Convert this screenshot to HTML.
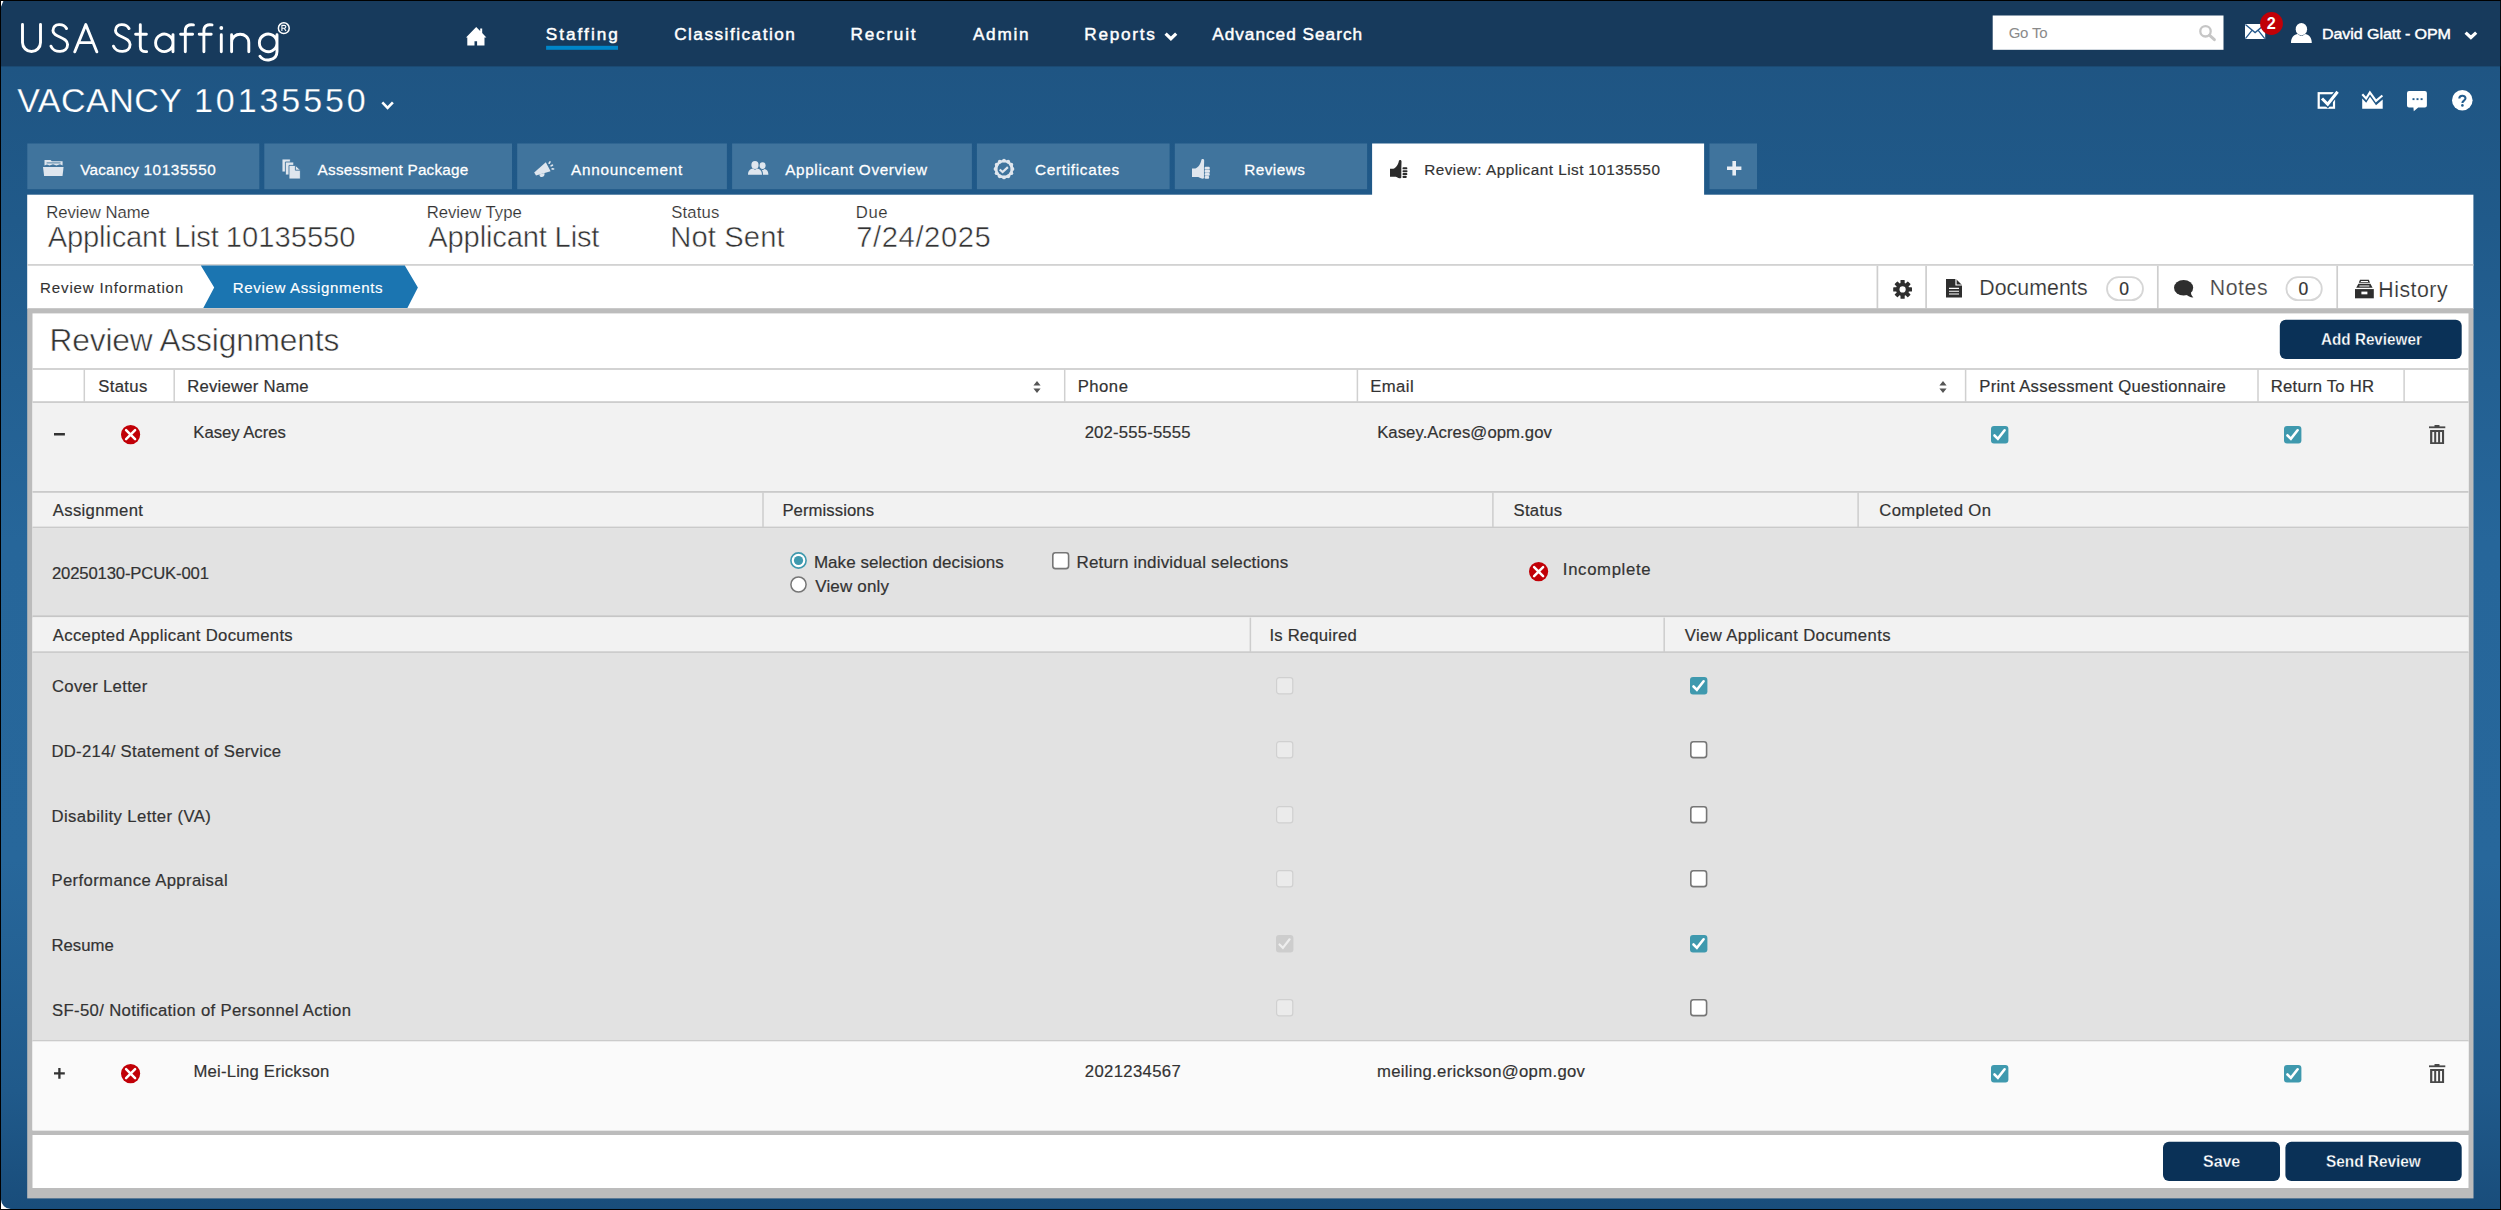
<!DOCTYPE html><html><head><meta charset="utf-8"><title>USA Staffing - Review Assignments</title><style>html,body{margin:0;padding:0}body{width:2501px;height:1210px;position:relative;overflow:hidden;background:#000;font-family:"Liberation Sans", sans-serif;}.t{position:absolute;line-height:1;white-space:pre;}</style></head><body>
<div style="position:absolute;left:1px;top:1px;width:2499.2px;height:1208px;background:linear-gradient(180deg,#1f5583 66px,#205a8a 220px,#26669a 540px,#27679b 860px,#205a8b 1090px,#194d7b 1207px);"></div>
<svg style="position:absolute;left:0;top:0" width="2501" height="1210"><rect x="1" y="1" width="2499.2" height="65.4" fill="#173a5c"/><path d="M1 1 H3.4 L1 6.8 Z" fill="#fff"/><path d="M1 1199.5 V1209 H10.8 A9.8 9.8 0 0 1 1 1199.5 Z" fill="#fff"/><rect x="1992.7" y="15.5" width="230.8" height="34.3" fill="#fff"/><rect x="546.1" y="45.8" width="71.9" height="4.0" fill="#0086c9"/><rect x="27.3" y="143.5" width="232.0" height="45.7" fill="#40749d"/><rect x="264.3" y="143.5" width="247.7" height="45.7" fill="#40749d"/><rect x="517.2" y="143.5" width="209.7" height="45.7" fill="#40749d"/><rect x="732.1" y="143.5" width="239.8" height="45.7" fill="#40749d"/><rect x="976.9" y="143.5" width="192.7" height="45.7" fill="#40749d"/><rect x="1174.8" y="143.5" width="192.3" height="45.7" fill="#40749d"/><rect x="1709.5" y="143.5" width="47.5" height="45.7" fill="#40749d"/><rect x="1372.1" y="143.5" width="332.0" height="52.5" fill="#fff"/><rect x="27.2" y="194.7" width="2446.2" height="114.3" fill="#fff"/><rect x="27.2" y="264.0" width="2446.2" height="1.8" fill="#d2d2d2"/><path d="M200.8 265.6 H404.8 L417.9 287.6 L407.4 308 H203.3 L214.2 287.6 Z" fill="#1b75b1"/><rect x="1876.5500000000002" y="265.8" width="1.7" height="42.5" fill="#cecece"/><rect x="1925.25" y="265.8" width="1.7" height="42.5" fill="#cecece"/><rect x="2156.9500000000003" y="265.8" width="1.7" height="42.5" fill="#cecece"/><rect x="2336.35" y="265.8" width="1.7" height="42.5" fill="#cecece"/><rect x="2107.0" y="277.2" width="36.0" height="22.9" rx="11.45" fill="#fff" stroke="#d6d6d6" stroke-width="1.8"/><rect x="2286.4" y="277.2" width="35.4" height="22.9" rx="11.45" fill="#fff" stroke="#d6d6d6" stroke-width="1.8"/><rect x="27.2" y="308.2" width="2446.3" height="890.2" fill="#bcbcbc"/><rect x="32.5" y="313.4" width="2436.0" height="817.0" fill="#fff"/><rect x="32.5" y="1135" width="2436.0" height="53" fill="#fff"/><rect x="32.5" y="368.1" width="2436.0" height="1.8" fill="#cfcfcf"/><rect x="32.5" y="402.6" width="2436.0" height="89.2" fill="#f2f2f2"/><rect x="32.5" y="401.2" width="2436.0" height="1.8" fill="#cdcdcd"/><rect x="83.55" y="369.5" width="1.5" height="32.5" fill="#d0d0d0"/><rect x="173.45" y="369.5" width="1.5" height="32.5" fill="#d0d0d0"/><rect x="1063.95" y="369.5" width="1.5" height="32.5" fill="#d0d0d0"/><rect x="1356.65" y="369.5" width="1.5" height="32.5" fill="#d0d0d0"/><rect x="1964.85" y="369.5" width="1.5" height="32.5" fill="#d0d0d0"/><rect x="2257.25" y="369.5" width="1.5" height="32.5" fill="#d0d0d0"/><rect x="2403.35" y="369.5" width="1.5" height="32.5" fill="#d0d0d0"/><rect x="32.5" y="491.8" width="2436.0" height="35.6" fill="#f2f2f2"/><rect x="32.5" y="491.0" width="2436.0" height="1.8" fill="#cacaca"/><rect x="32.5" y="526.6" width="2436.0" height="1.8" fill="#cacaca"/><rect x="762.25" y="492.4" width="1.5" height="34.6" fill="#cdcdcd"/><rect x="1492.15" y="492.4" width="1.5" height="34.6" fill="#cdcdcd"/><rect x="1857.35" y="492.4" width="1.5" height="34.6" fill="#cdcdcd"/><rect x="32.5" y="528.2" width="2436.0" height="87.8" fill="#e2e2e2"/><rect x="32.5" y="615.4" width="2436.0" height="2.0" fill="#c6c6c6"/><rect x="32.5" y="617.4" width="2436.0" height="34.6" fill="#f2f2f2"/><rect x="32.5" y="651.3" width="2436.0" height="1.8" fill="#cacaca"/><rect x="1249.65" y="617.6" width="1.5" height="34.4" fill="#cdcdcd"/><rect x="1663.45" y="617.6" width="1.5" height="34.4" fill="#cdcdcd"/><rect x="32.5" y="652.9" width="2436.0" height="387.5" fill="#e2e2e2"/><rect x="32.5" y="1040.0" width="2436.0" height="1.6" fill="#cbcbcb"/><rect x="32.5" y="1041.5" width="2436.0" height="88.9" fill="#fafafa"/><rect x="2279.8" y="319.7" width="181.9" height="39.2" rx="6" fill="#0a3157"/><rect x="2163" y="1141.8" width="117" height="39.3" rx="6" fill="#0a3157"/><rect x="2285.4" y="1141.8" width="176.3" height="39.3" rx="6" fill="#0a3157"/></svg>
<svg style="position:absolute;left:53.6px;top:432.9px;overflow:visible;" width="11" height="3" viewBox="0 0 11 3"><rect width="10.9" height="2.5" fill="#333"/></svg>
<svg style="position:absolute;left:53.7px;top:1067.5px;overflow:visible;" width="10.8" height="10.8" viewBox="0 0 10.8 10.8"><path d="M5.4 0 V10.8 M0 5.4 H10.8" stroke="#333" stroke-width="2.3"/></svg>
<svg style="position:absolute;left:120.5px;top:425.0px;overflow:visible;" width="19.2" height="19.2" viewBox="0 0 19.2 19.2"><circle cx="9.6" cy="9.6" r="9.6" fill="#c10007"/><path d="M5.1 5.1 L14.1 14.1 M14.1 5.1 L5.1 14.1" stroke="#fff" stroke-width="2.5" stroke-linecap="round"/></svg>
<svg style="position:absolute;left:120.5px;top:1063.9px;overflow:visible;" width="19.2" height="19.2" viewBox="0 0 19.2 19.2"><circle cx="9.6" cy="9.6" r="9.6" fill="#c10007"/><path d="M5.1 5.1 L14.1 14.1 M14.1 5.1 L5.1 14.1" stroke="#fff" stroke-width="2.5" stroke-linecap="round"/></svg>
<svg style="position:absolute;left:1529.3000000000002px;top:562.0px;overflow:visible;" width="19.2" height="19.2" viewBox="0 0 19.2 19.2"><circle cx="9.6" cy="9.6" r="9.6" fill="#c10007"/><path d="M5.1 5.1 L14.1 14.1 M14.1 5.1 L5.1 14.1" stroke="#fff" stroke-width="2.5" stroke-linecap="round"/></svg>
<svg style="position:absolute;left:1991.3999999999999px;top:426.2px;overflow:visible;" width="17.4" height="17.4" viewBox="0 0 17.4 17.4"><rect x="0" y="0" width="17.4" height="17.4" rx="3" fill="#3f99ae"/><path d="M3.5 9.5 L6.9 12.9 L13.6 4.3" fill="none" stroke="#fff" stroke-width="2.6" stroke-linecap="round" stroke-linejoin="miter"/></svg>
<svg style="position:absolute;left:2283.6000000000004px;top:426.2px;overflow:visible;" width="17.4" height="17.4" viewBox="0 0 17.4 17.4"><rect x="0" y="0" width="17.4" height="17.4" rx="3" fill="#3f99ae"/><path d="M3.5 9.5 L6.9 12.9 L13.6 4.3" fill="none" stroke="#fff" stroke-width="2.6" stroke-linecap="round" stroke-linejoin="miter"/></svg>
<svg style="position:absolute;left:1991.3999999999999px;top:1065.3px;overflow:visible;" width="17.4" height="17.4" viewBox="0 0 17.4 17.4"><rect x="0" y="0" width="17.4" height="17.4" rx="3" fill="#3f99ae"/><path d="M3.5 9.5 L6.9 12.9 L13.6 4.3" fill="none" stroke="#fff" stroke-width="2.6" stroke-linecap="round" stroke-linejoin="miter"/></svg>
<svg style="position:absolute;left:2283.6000000000004px;top:1065.3px;overflow:visible;" width="17.4" height="17.4" viewBox="0 0 17.4 17.4"><rect x="0" y="0" width="17.4" height="17.4" rx="3" fill="#3f99ae"/><path d="M3.5 9.5 L6.9 12.9 L13.6 4.3" fill="none" stroke="#fff" stroke-width="2.6" stroke-linecap="round" stroke-linejoin="miter"/></svg>
<svg style="position:absolute;left:2428.7px;top:424.9px;overflow:visible;" width="16.3" height="19.1" viewBox="0 0 16.3 19.1"><g fill="#484848"><rect x="5.3" y="0" width="5.4" height="2" rx="0.9"/><rect x="0" y="1.4" width="16.3" height="1.8"/><path d="M1.1 4.9 H15.1 V19.1 H1.1 Z M3.3 6.9 V17.2 H5.2 V6.9 Z M7.2 6.9 V17.2 H9.1 V6.9 Z M11.1 6.9 V17.2 H13 V6.9 Z" fill-rule="evenodd"/></g></svg>
<svg style="position:absolute;left:2428.7px;top:1063.9px;overflow:visible;" width="16.3" height="19.1" viewBox="0 0 16.3 19.1"><g fill="#484848"><rect x="5.3" y="0" width="5.4" height="2" rx="0.9"/><rect x="0" y="1.4" width="16.3" height="1.8"/><path d="M1.1 4.9 H15.1 V19.1 H1.1 Z M3.3 6.9 V17.2 H5.2 V6.9 Z M7.2 6.9 V17.2 H9.1 V6.9 Z M11.1 6.9 V17.2 H13 V6.9 Z" fill-rule="evenodd"/></g></svg>
<svg style="position:absolute;left:1033.2px;top:380.9px;overflow:visible;" width="8" height="12" viewBox="0 0 8 12"><path d="M4 0 L7.6 4.6 H0.4 Z M4 12 L7.6 7.4 H0.4 Z" fill="#555"/></svg>
<svg style="position:absolute;left:1939.3px;top:380.9px;overflow:visible;" width="8" height="12" viewBox="0 0 8 12"><path d="M4 0 L7.6 4.6 H0.4 Z M4 12 L7.6 7.4 H0.4 Z" fill="#555"/></svg>
<svg style="position:absolute;left:790.1px;top:551.5px;overflow:visible;" width="17" height="17" viewBox="0 0 17 17"><circle cx="8.5" cy="8.5" r="7.6" fill="#fff" stroke="#3f99ae" stroke-width="1.6"/><circle cx="8.5" cy="8.5" r="4.6" fill="#3f99ae"/></svg>
<svg style="position:absolute;left:790.1px;top:575.6px;overflow:visible;" width="17" height="17" viewBox="0 0 17 17"><circle cx="8.5" cy="8.5" r="7.6" fill="#fff" stroke="#767676" stroke-width="1.5"/></svg>
<svg style="position:absolute;left:1051.8999999999999px;top:551.5999999999999px;overflow:visible;" width="17.4" height="17.4" viewBox="0 0 17.4 17.4"><rect x="0.8" y="0.8" width="15.8" height="15.8" rx="2.6" fill="#fff" stroke="#767676" stroke-width="1.6"/></svg>
<svg style="position:absolute;left:1276.1px;top:676.9px;overflow:visible;" width="17.4" height="17.4" viewBox="0 0 17.4 17.4"><rect x="0.6" y="0.6" width="16.2" height="16.2" rx="2.6" fill="#ebebeb" stroke="#d0d0d0" stroke-width="1.2"/></svg>
<svg style="position:absolute;left:1689.8999999999999px;top:676.9px;overflow:visible;" width="17.4" height="17.4" viewBox="0 0 17.4 17.4"><rect x="0" y="0" width="17.4" height="17.4" rx="3" fill="#3f99ae"/><path d="M3.5 9.5 L6.9 12.9 L13.6 4.3" fill="none" stroke="#fff" stroke-width="2.6" stroke-linecap="round" stroke-linejoin="miter"/></svg>
<svg style="position:absolute;left:1276.1px;top:741.4px;overflow:visible;" width="17.4" height="17.4" viewBox="0 0 17.4 17.4"><rect x="0.6" y="0.6" width="16.2" height="16.2" rx="2.6" fill="#ebebeb" stroke="#d0d0d0" stroke-width="1.2"/></svg>
<svg style="position:absolute;left:1689.8999999999999px;top:741.4px;overflow:visible;" width="17.4" height="17.4" viewBox="0 0 17.4 17.4"><rect x="0.8" y="0.8" width="15.8" height="15.8" rx="2.6" fill="#fff" stroke="#767676" stroke-width="1.6"/></svg>
<svg style="position:absolute;left:1276.1px;top:805.9px;overflow:visible;" width="17.4" height="17.4" viewBox="0 0 17.4 17.4"><rect x="0.6" y="0.6" width="16.2" height="16.2" rx="2.6" fill="#ebebeb" stroke="#d0d0d0" stroke-width="1.2"/></svg>
<svg style="position:absolute;left:1689.8999999999999px;top:805.9px;overflow:visible;" width="17.4" height="17.4" viewBox="0 0 17.4 17.4"><rect x="0.8" y="0.8" width="15.8" height="15.8" rx="2.6" fill="#fff" stroke="#767676" stroke-width="1.6"/></svg>
<svg style="position:absolute;left:1276.1px;top:870.4px;overflow:visible;" width="17.4" height="17.4" viewBox="0 0 17.4 17.4"><rect x="0.6" y="0.6" width="16.2" height="16.2" rx="2.6" fill="#ebebeb" stroke="#d0d0d0" stroke-width="1.2"/></svg>
<svg style="position:absolute;left:1689.8999999999999px;top:870.4px;overflow:visible;" width="17.4" height="17.4" viewBox="0 0 17.4 17.4"><rect x="0.8" y="0.8" width="15.8" height="15.8" rx="2.6" fill="#fff" stroke="#767676" stroke-width="1.6"/></svg>
<svg style="position:absolute;left:1276.1px;top:934.9px;overflow:visible;" width="17.4" height="17.4" viewBox="0 0 17.4 17.4"><rect x="0" y="0" width="17.4" height="17.4" rx="3" fill="#cdcdcd"/><path d="M3.5 9.5 L6.9 12.9 L13.6 4.3" fill="none" stroke="#eeeeee" stroke-width="2.2" stroke-linecap="round"/></svg>
<svg style="position:absolute;left:1689.8999999999999px;top:934.9px;overflow:visible;" width="17.4" height="17.4" viewBox="0 0 17.4 17.4"><rect x="0" y="0" width="17.4" height="17.4" rx="3" fill="#3f99ae"/><path d="M3.5 9.5 L6.9 12.9 L13.6 4.3" fill="none" stroke="#fff" stroke-width="2.6" stroke-linecap="round" stroke-linejoin="miter"/></svg>
<svg style="position:absolute;left:1276.1px;top:999.4px;overflow:visible;" width="17.4" height="17.4" viewBox="0 0 17.4 17.4"><rect x="0.6" y="0.6" width="16.2" height="16.2" rx="2.6" fill="#ebebeb" stroke="#d0d0d0" stroke-width="1.2"/></svg>
<svg style="position:absolute;left:1689.8999999999999px;top:999.4px;overflow:visible;" width="17.4" height="17.4" viewBox="0 0 17.4 17.4"><rect x="0.8" y="0.8" width="15.8" height="15.8" rx="2.6" fill="#fff" stroke="#767676" stroke-width="1.6"/></svg>
<svg style="position:absolute;left:0px;top:0px;overflow:visible;" width="300" height="66" viewBox="0 0 300 66"><path d="M22.5 24.5 V42.5 A9 9 0 0 0 40.5 42.5 V24.5 M66.5 28.5 C64 23.5 53.5 22.5 53 30.5 C52.6 37.5 67.6 36.5 67.6 44.5 C67.6 53.5 53.5 53.3 51 46.2 M74.8 51.8 L85.8 24.6 L96.8 51.8 M79 42.6 H92.6 M129 28.5 C126.5 23.5 116 22.5 115.5 30.5 C115.1 37.5 130.1 36.5 130.1 44.5 C130.1 53.5 116 53.3 113.5 46.2 M140.3 24.8 V46.5 C140.3 50.5 142.5 52 146.6 51.6 M135.6 34.3 H146.4 M173 43 A8.7 8.7 0 1 0 172.99 43.3 M173 34.6 V51.8 M185.3 51.8 V30.5 C185.3 26 188.5 24 193.4 24.9 M180.6 34.3 H192.6 M203.9 51.8 V30.5 C203.9 26 207.1 24 212 24.9 M199.2 34.3 H211.2 M221.3 34.8 V51.8 M231.6 34.8 V51.8 M231.6 42.5 C231.6 31.5 248.8 31.5 248.8 42.5 V51.8 M277 43 A8.8 8.8 0 1 0 276.99 43.3 M277 34.8 V51.5 C277 61.5 263.5 62 260 56.2" fill="none" stroke="#fff" stroke-width="2.9" stroke-linecap="round" stroke-linejoin="round"/><circle cx="221.3" cy="28" r="1.9" fill="#fff"/><circle cx="283.8" cy="28.2" r="5.4" fill="none" stroke="#fff" stroke-width="1.5"/><path d="M281.9 31 V25.4 H284.2 C286.4 25.4 286.4 28.3 284.2 28.3 H281.9 M284.3 28.4 L286 31" fill="none" stroke="#fff" stroke-width="1.1"/></svg>
<svg style="position:absolute;left:466.4px;top:27.2px;overflow:visible;" width="20.4" height="18.6" viewBox="0 0 20.4 18.6"><path d="M10.2 0 L0 10.4 H1.3 V18.6 H8.5 V14.2 H11.1 V18.6 H18.5 V10.4 H20.4 L16.2 6.1 V1.4 H14.2 V4.1 Z" fill="#fff"/></svg>
<svg style="position:absolute;left:1164.1px;top:32.2px;overflow:visible;" width="13.8" height="8.6" viewBox="0 0 13.8 8.6"><path d="M1.6 1.6 L6.9 6.7 L12.200000000000001 1.6" fill="none" stroke="#fff" stroke-width="3.2" stroke-linejoin="miter" stroke-linecap="butt"/></svg>
<svg style="position:absolute;left:2197.6px;top:23.8px;overflow:visible;" width="18" height="18" viewBox="0 0 18 18"><circle cx="7.5" cy="7.3" r="5.2" fill="none" stroke="#c6c6c6" stroke-width="2.3"/><path d="M11.4 11.2 L16.4 15.7" stroke="#c6c6c6" stroke-width="2.9" stroke-linecap="round"/></svg>
<svg style="position:absolute;left:2245.4px;top:24px;overflow:visible;" width="20.2" height="15" viewBox="0 0 20.2 15"><rect width="20.2" height="15" fill="#fff"/><path d="M0.4 0.6 L10.1 8.6 L19.8 0.6 M0.4 14.6 L7 6.4 M19.8 14.6 L13.2 6.4" fill="none" stroke="#23578b" stroke-width="1.3"/></svg>
<svg style="position:absolute;left:2259.9px;top:11.6px;overflow:visible;" width="23" height="23" viewBox="0 0 23 23"><circle cx="11.5" cy="11.5" r="11.4" fill="#c10007"/></svg>
<svg style="position:absolute;left:2291.4px;top:22.6px;overflow:visible;" width="20.8" height="20" viewBox="0 0 20.8 20"><ellipse cx="10.4" cy="6.2" rx="5.7" ry="6.2" fill="#fff"/><path d="M0 20 C0 14 3 11.6 7 11 C8.6 13.4 12.2 13.4 13.8 11 C17.8 11.6 20.8 14 20.8 20 Z" fill="#fff"/></svg>
<svg style="position:absolute;left:2464.3px;top:31.2px;overflow:visible;" width="13.8" height="8.4" viewBox="0 0 13.8 8.4"><path d="M1.6 1.6 L6.9 6.500000000000001 L12.200000000000001 1.6" fill="none" stroke="#fff" stroke-width="3.2" stroke-linejoin="miter" stroke-linecap="butt"/></svg>
<svg style="position:absolute;left:381.1px;top:100.8px;overflow:visible;" width="13.2" height="8.4" viewBox="0 0 13.2 8.4"><path d="M1.3 1.3 L6.6 6.800000000000001 L11.899999999999999 1.3" fill="none" stroke="#fff" stroke-width="2.6" stroke-linejoin="miter" stroke-linecap="butt"/></svg>
<svg style="position:absolute;left:2310px;top:85px;overflow:visible;" width="30" height="30" viewBox="0 0 30 30"><rect x="8.7" y="8.2" width="15.3" height="14.5" fill="none" stroke="#fff" stroke-width="2.2"/><path d="M12 13.5 L17.7 19.2 L27.6 6.7" fill="none" stroke="#1f5887" stroke-width="5.6"/><path d="M12 13.5 L17.7 19.2 L27.6 6.7" fill="none" stroke="#fff" stroke-width="3"/></svg>
<svg style="position:absolute;left:2355px;top:85px;overflow:visible;" width="35" height="30" viewBox="0 0 35 30"><path d="M7.3 9.3 L11.1 13.5 L14.9 7.4 L21 15.8 L27.4 10.5" fill="none" stroke="#fff" stroke-width="2.2" stroke-linejoin="miter"/><path d="M7.2 13.6 L11.2 17.8 L15 11.8 L21 20.2 L27.7 14.6 V23.8 H7.2 Z" fill="#fff"/></svg>
<svg style="position:absolute;left:2406.8px;top:90.9px;overflow:visible;" width="20" height="20.2" viewBox="0 0 20 20.2"><path d="M2 0 H17.9 A2 2 0 0 1 19.9 2 V14.4 A2 2 0 0 1 17.9 16.4 H11.2 L6.8 20.2 L6.4 16.4 H2 A2 2 0 0 1 0 14.4 V2 A2 2 0 0 1 2 0 Z" fill="#fff"/><g fill="#235d8e"><rect x="5.5" y="7.2" width="2" height="1.9"/><rect x="9.5" y="7.2" width="2" height="1.9"/><rect x="13.6" y="7.2" width="2" height="1.9"/></g></svg>
<svg style="position:absolute;left:2451.6px;top:89.7px;overflow:visible;" width="20.6" height="20.6" viewBox="0 0 20.6 20.6"><circle cx="10.3" cy="10.3" r="10.3" fill="#fff"/><path d="M7.3 8.6 C7.3 4.9 13.5 4.9 13.5 8.3 C13.5 10.6 10.4 10.6 10.4 12.9" fill="none" stroke="#235d8e" stroke-width="2.1"/><circle cx="10.4" cy="15.4" r="1.3" fill="#235d8e"/></svg>
<svg style="position:absolute;left:43.4px;top:160.4px;overflow:visible;" width="20.4" height="16" viewBox="0 0 20.4 16"><g fill="#dfe6ee"><path d="M1.5 0 H7.6 L8.8 1.3 H19.6 V5.6 L17 4.2 L13.4 5.6 L10 4.2 L6.6 5.6 L4 4.4 L1.5 5.6 Z"/><path d="M0 7 H20.6 L19.5 16 H1.1 Z"/></g><path d="M3.6 2.9 H17.6" stroke="#40749d" stroke-width="0.9"/></svg>
<svg style="position:absolute;left:282.2px;top:158.6px;overflow:visible;" width="18.4" height="20" viewBox="0 0 18.4 20"><g fill="#dfe6ee" stroke="#40749d" stroke-width="0.9"><path d="M0 0 H8.4 V13 H0 Z"/><path d="M3.4 3 H11.8 V16 H3.4 Z"/><path d="M7 6.4 H13.6 L18.4 11 V20 H7 Z"/></g><path d="M13.4 6.6 V11.2 H18.2" fill="none" stroke="#40749d" stroke-width="0.9"/></svg>
<svg style="position:absolute;left:534.4px;top:160.6px;overflow:visible;" width="20.2" height="16" viewBox="0 0 20.2 16"><g fill="#dfe6ee"><path d="M0.2 11.4 L11.8 1.3 L16.6 10.2 L2 14.6 Z"/><path d="M5.4 13.4 L10.4 12 C11 14.4 9.6 16 7.6 16 C6.2 16 5.4 14.8 5.4 13.4 Z"/></g><g stroke="#dfe6ee" stroke-width="1.7" stroke-linecap="round"><path d="M15.2 2.2 L16 0.9"/><path d="M17.2 4.8 L18.4 4.2"/><path d="M18.2 7.8 L19.6 8"/></g></svg>
<svg style="position:absolute;left:748px;top:161.4px;overflow:visible;" width="20.4" height="13.8" viewBox="0 0 20.4 13.8"><g fill="#dfe6ee"><ellipse cx="7" cy="4" rx="3.6" ry="4"/><path d="M0 13.8 C0 9.4 2.4 8.2 5 7.6 C6.2 9 7.8 9 9 7.6 C11.6 8.2 14 9.4 14 13.8 Z"/><ellipse cx="14.6" cy="4.6" rx="3" ry="3.4"/><path d="M15 13.8 C15 11 14.4 9.6 13.2 8.6 C14.4 9.2 15.6 9 16.4 8 C18.6 8.6 20.4 9.6 20.4 13.8 Z"/></g></svg>
<svg style="position:absolute;left:992.5px;top:157.5px;overflow:visible;" width="22" height="22" viewBox="0 0 22 22"><circle cx="11" cy="11" r="8.0" fill="none" stroke="#dfe6ee" stroke-width="2.7"/><g fill="#dfe6ee"><circle cx="19.45" cy="11.00" r="1.9"/><circle cx="18.32" cy="15.22" r="1.9"/><circle cx="15.23" cy="18.32" r="1.9"/><circle cx="11.00" cy="19.45" r="1.9"/><circle cx="6.78" cy="18.32" r="1.9"/><circle cx="3.68" cy="15.22" r="1.9"/><circle cx="2.55" cy="11.00" r="1.9"/><circle cx="3.68" cy="6.77" r="1.9"/><circle cx="6.77" cy="3.68" r="1.9"/><circle cx="11.00" cy="2.55" r="1.9"/><circle cx="15.23" cy="3.68" r="1.9"/><circle cx="18.32" cy="6.77" r="1.9"/></g><path d="M6.7 11.5 L9.6 14.1 L14.9 9.1" fill="none" stroke="#dfe6ee" stroke-width="2.2"/></svg>
<svg style="position:absolute;left:1192px;top:158.6px;overflow:visible;" width="18" height="20" viewBox="0 0 18 20"><g transform="scale(1.04,1.055)"><g fill="#dfe6ee"><path d="M0 9 H3.2 C6 8.2 8.2 5 9 1 C9.2 -0.3 11.5 -0.3 11.7 1.4 L11.5 8 V17.8 C11.5 18.7 10 18.9 8.6 18.3 L6 17 H0 Z"/><rect x="12.15" y="7.4" width="4.9" height="2.65" rx="0.9"/><rect x="12.15" y="10.3" width="5.1" height="2.65" rx="0.9"/><rect x="12.15" y="13.2" width="4.9" height="2.65" rx="0.9"/><rect x="12.15" y="16.1" width="4.3" height="2.65" rx="0.9"/></g></g></svg>
<svg style="position:absolute;left:1390.4px;top:160.3px;overflow:visible;" width="17" height="18.6" viewBox="0 0 17 18.6"><g transform="scale(0.985,0.985)"><g fill="#2b2b2b"><path d="M0 9 H3.2 C6 8.2 8.2 5 9 1 C9.2 -0.3 11.5 -0.3 11.7 1.4 L11.5 8 V17.8 C11.5 18.7 10 18.9 8.6 18.3 L6 17 H0 Z"/><rect x="12.700000000000001" y="7.4" width="4.9" height="2.0999999999999996" rx="0.9"/><rect x="12.700000000000001" y="10.3" width="5.1" height="2.0999999999999996" rx="0.9"/><rect x="12.700000000000001" y="13.2" width="4.9" height="2.0999999999999996" rx="0.9"/><rect x="12.700000000000001" y="16.1" width="4.3" height="2.0999999999999996" rx="0.9"/></g></g></svg>
<svg style="position:absolute;left:1726.6px;top:161.4px;overflow:visible;" width="14.4" height="14.4" viewBox="0 0 14.4 14.4"><path d="M7.2 0 V14.4 M0 7.2 H14.4" stroke="#e9eef4" stroke-width="3.6"/></svg>
<svg style="position:absolute;left:1892.8px;top:280px;overflow:visible;" width="19.2" height="18.8" viewBox="0 0 19.2 18.8"><g transform="translate(9.6,9.4)"><g fill="#2e2e2e"><rect x="-2.1" y="-9.4" width="4.2" height="18.8" rx="0.6" transform="rotate(0)"/><rect x="-2.1" y="-9.4" width="4.2" height="18.8" rx="0.6" transform="rotate(45)"/><rect x="-2.1" y="-9.4" width="4.2" height="18.8" rx="0.6" transform="rotate(90)"/><rect x="-2.1" y="-9.4" width="4.2" height="18.8" rx="0.6" transform="rotate(135)"/><circle r="6.6"/></g><circle r="3.1" fill="#fff"/></g></svg>
<svg style="position:absolute;left:1945.8px;top:279px;overflow:visible;" width="16" height="18.6" viewBox="0 0 16 18.6"><path d="M0 0 H10 L16 6 V18.6 H0 Z" fill="#2e2e2e"/><path d="M10 0 V6 H16" fill="none" stroke="#fff" stroke-width="1.2"/><path d="M3 9.4 H13 M3 12.2 H13 M3 15 H13" stroke="#fff" stroke-width="1.1"/></svg>
<svg style="position:absolute;left:2173.8px;top:280px;overflow:visible;" width="20" height="17.6" viewBox="0 0 20 17.6"><ellipse cx="9.6" cy="7.8" rx="9.6" ry="7.8" fill="#2e2e2e"/><path d="M11 13 C13 16 16 17.4 19.4 17.4 C17.4 15.6 16.8 13.6 17 11.4 Z" fill="#2e2e2e"/></svg>
<svg style="position:absolute;left:2354.6px;top:278.6px;overflow:visible;" width="18.8" height="19.3" viewBox="0 0 18.8 19.3"><g transform="scale(1,1.05)"><g fill="#2e2e2e"><path d="M0 9.6 H18.8 V18.4 H0 Z"/><path d="M1.2 8.4 L3.4 4.6 H15.4 L17.6 8.4 Z"/><path d="M3.8 3.6 L5 0.8 H13.8 L15 3.6 Z"/></g><path d="M4.4 6.6 H14.4 M5.8 2.4 H13" stroke="#fff" stroke-width="1"/><rect x="6.4" y="12" width="6" height="2.6" fill="#fff"/></g></svg>
<div class="t" style="left:545.74px;top:26.30px;font-size:17.2px;font-weight:400;color:#fff;letter-spacing:2.022px;-webkit-text-stroke:0.45px #fff;">Staffing</div>
<div class="t" style="left:674.15px;top:26.30px;font-size:17.2px;font-weight:400;color:#fff;letter-spacing:1.498px;-webkit-text-stroke:0.45px #fff;">Classification</div>
<div class="t" style="left:850.61px;top:26.30px;font-size:17.2px;font-weight:400;color:#fff;letter-spacing:1.739px;-webkit-text-stroke:0.45px #fff;">Recruit</div>
<div class="t" style="left:972.89px;top:26.30px;font-size:17.2px;font-weight:400;color:#fff;letter-spacing:1.745px;-webkit-text-stroke:0.45px #fff;">Admin</div>
<div class="t" style="left:1084.31px;top:26.30px;font-size:17.2px;font-weight:400;color:#fff;letter-spacing:1.716px;-webkit-text-stroke:0.45px #fff;">Reports</div>
<div class="t" style="left:1212.19px;top:26.30px;font-size:17.2px;font-weight:400;color:#fff;letter-spacing:1.015px;-webkit-text-stroke:0.45px #fff;">Advanced Search</div>
<div class="t" style="left:2008.65px;top:24.80px;font-size:15.0px;font-weight:400;color:#8a8a8a;letter-spacing:-0.191px;">Go To</div>
<div class="t" style="left:2266.84px;top:14.70px;font-size:16.2px;font-weight:700;color:#fff;letter-spacing:0.000px;">2</div>
<div class="t" style="left:2322.00px;top:25.30px;font-size:16.1px;font-weight:400;color:#fff;letter-spacing:-0.099px;-webkit-text-stroke:0.45px #fff;transform:scaleY(0.93);transform-origin:1.32px 14.00px;">David Glatt - OPM</div>
<div class="t" style="left:17.13px;top:82.60px;font-size:34.0px;font-weight:400;color:#fff;letter-spacing:0.498px;-webkit-text-stroke:0.25px #1f5786;">VACANCY</div>
<div class="t" style="left:193.99px;top:82.60px;font-size:34.0px;font-weight:400;color:#fff;letter-spacing:2.927px;-webkit-text-stroke:0.25px #1f5786;">10135550</div>
<div class="t" style="left:80.17px;top:162.00px;font-size:15.3px;font-weight:400;color:#fff;letter-spacing:0.213px;-webkit-text-stroke:0.27px #fff;">Vacancy</div>
<div class="t" style="left:143.47px;top:162.00px;font-size:15.3px;font-weight:400;color:#fff;letter-spacing:0.604px;-webkit-text-stroke:0.27px #fff;">10135550</div>
<div class="t" style="left:317.61px;top:162.00px;font-size:15.3px;font-weight:400;color:#fff;letter-spacing:0.209px;-webkit-text-stroke:0.27px #fff;">Assessment Package</div>
<div class="t" style="left:571.11px;top:162.00px;font-size:15.3px;font-weight:400;color:#fff;letter-spacing:0.751px;-webkit-text-stroke:0.27px #fff;">Announcement</div>
<div class="t" style="left:785.21px;top:162.00px;font-size:15.3px;font-weight:400;color:#fff;letter-spacing:0.646px;-webkit-text-stroke:0.27px #fff;">Applicant Overview</div>
<div class="t" style="left:1034.96px;top:162.00px;font-size:15.3px;font-weight:400;color:#fff;letter-spacing:0.704px;-webkit-text-stroke:0.27px #fff;">Certificates</div>
<div class="t" style="left:1244.18px;top:162.00px;font-size:15.3px;font-weight:400;color:#fff;letter-spacing:0.471px;-webkit-text-stroke:0.27px #fff;">Reviews</div>
<div class="t" style="left:1424.14px;top:162.00px;font-size:15.3px;font-weight:400;color:#333;letter-spacing:0.503px;-webkit-text-stroke:0.2px #333;">Review: Applicant List</div>
<div class="t" style="left:1588.33px;top:162.00px;font-size:15.3px;font-weight:400;color:#333;letter-spacing:0.500px;-webkit-text-stroke:0.2px #333;">10135550</div>
<div class="t" style="left:46.26px;top:205.30px;font-size:16.7px;font-weight:400;color:#333;letter-spacing:-0.031px;-webkit-text-stroke:0.15px #fff;">Review Name</div>
<div class="t" style="left:426.76px;top:205.30px;font-size:16.7px;font-weight:400;color:#333;letter-spacing:-0.027px;-webkit-text-stroke:0.15px #fff;">Review Type</div>
<div class="t" style="left:671.17px;top:205.30px;font-size:16.7px;font-weight:400;color:#333;letter-spacing:0.180px;-webkit-text-stroke:0.15px #fff;">Status</div>
<div class="t" style="left:855.86px;top:205.30px;font-size:16.7px;font-weight:400;color:#333;letter-spacing:0.568px;-webkit-text-stroke:0.15px #fff;">Due</div>
<div class="t" style="left:47.69px;top:223.40px;font-size:29.2px;font-weight:400;color:#333;letter-spacing:-0.188px;-webkit-text-stroke:0.5px #fff;">Applicant List</div>
<div class="t" style="left:225.73px;top:223.40px;font-size:29.2px;font-weight:400;color:#333;letter-spacing:-0.001px;-webkit-text-stroke:0.5px #fff;">10135550</div>
<div class="t" style="left:428.29px;top:223.40px;font-size:29.2px;font-weight:400;color:#333;letter-spacing:-0.188px;-webkit-text-stroke:0.5px #fff;">Applicant List</div>
<div class="t" style="left:670.35px;top:223.40px;font-size:29.2px;font-weight:400;color:#333;letter-spacing:0.104px;-webkit-text-stroke:0.5px #fff;">Not Sent</div>
<div class="t" style="left:856.25px;top:223.40px;font-size:29.2px;font-weight:400;color:#333;letter-spacing:0.583px;-webkit-text-stroke:0.5px #fff;">7/24/2025</div>
<div class="t" style="left:40.12px;top:280.20px;font-size:15.1px;font-weight:400;color:#333;letter-spacing:0.817px;-webkit-text-stroke:0.12px #333;">Review Information</div>
<div class="t" style="left:232.74px;top:280.20px;font-size:15.1px;font-weight:400;color:#fff;letter-spacing:0.628px;-webkit-text-stroke:0.15px #fff;">Review Assignments</div>
<div class="t" style="left:1979.16px;top:277.80px;font-size:21.3px;font-weight:400;color:#333;letter-spacing:0.097px;-webkit-text-stroke:0.18px #fff;">Documents</div>
<div class="t" style="left:2119.22px;top:281.00px;font-size:17.5px;font-weight:400;color:#333;letter-spacing:0.000px;-webkit-text-stroke:0.2px #333;">0</div>
<div class="t" style="left:2209.75px;top:277.80px;font-size:21.3px;font-weight:400;color:#444;letter-spacing:0.544px;-webkit-text-stroke:0.2px #fff;">Notes</div>
<div class="t" style="left:2298.42px;top:281.00px;font-size:17.5px;font-weight:400;color:#333;letter-spacing:0.000px;-webkit-text-stroke:0.2px #333;">0</div>
<div class="t" style="left:2378.36px;top:279.90px;font-size:21.3px;font-weight:400;color:#333;letter-spacing:0.484px;-webkit-text-stroke:0.18px #fff;">History</div>
<div class="t" style="left:49.55px;top:325.20px;font-size:31.7px;font-weight:400;color:#333;letter-spacing:-0.154px;-webkit-text-stroke:0.5px #fff;">Review Assignments</div>
<div class="t" style="left:2320.73px;top:331.30px;font-size:17.0px;font-weight:700;color:#fff;letter-spacing:0.000px;-webkit-text-stroke:0.3px #0a3157;transform:scaleX(0.8963);transform-origin:0.42px 14.00px;">Add Reviewer</div>
<div class="t" style="left:98.24px;top:378.90px;font-size:16.7px;font-weight:400;color:#333;letter-spacing:0.350px;-webkit-text-stroke:0.2px #333;">Status</div>
<div class="t" style="left:187.13px;top:378.90px;font-size:16.7px;font-weight:400;color:#333;letter-spacing:0.234px;-webkit-text-stroke:0.2px #333;">Reviewer Name</div>
<div class="t" style="left:1077.63px;top:378.90px;font-size:16.7px;font-weight:400;color:#333;letter-spacing:0.512px;-webkit-text-stroke:0.2px #333;">Phone</div>
<div class="t" style="left:1370.13px;top:378.90px;font-size:16.7px;font-weight:400;color:#333;letter-spacing:0.438px;-webkit-text-stroke:0.2px #333;">Email</div>
<div class="t" style="left:1979.23px;top:378.90px;font-size:16.7px;font-weight:400;color:#333;letter-spacing:0.316px;-webkit-text-stroke:0.2px #333;">Print Assessment Questionnaire</div>
<div class="t" style="left:2270.83px;top:378.90px;font-size:16.7px;font-weight:400;color:#333;letter-spacing:0.213px;-webkit-text-stroke:0.2px #333;">Return To HR</div>
<div class="t" style="left:193.33px;top:425.10px;font-size:16.7px;font-weight:400;color:#333;letter-spacing:-0.029px;-webkit-text-stroke:0.2px #333;">Kasey Acres</div>
<div class="t" style="left:1084.66px;top:425.10px;font-size:16.7px;font-weight:400;color:#333;letter-spacing:0.182px;-webkit-text-stroke:0.2px #333;">202-555-5555</div>
<div class="t" style="left:1377.13px;top:425.10px;font-size:16.7px;font-weight:400;color:#333;letter-spacing:0.074px;-webkit-text-stroke:0.2px #333;">Kasey.Acres@opm.gov</div>
<div class="t" style="left:52.77px;top:503.00px;font-size:16.7px;font-weight:400;color:#333;letter-spacing:0.330px;-webkit-text-stroke:0.2px #333;">Assignment</div>
<div class="t" style="left:782.43px;top:503.00px;font-size:16.7px;font-weight:400;color:#333;letter-spacing:0.068px;-webkit-text-stroke:0.2px #333;">Permissions</div>
<div class="t" style="left:1513.54px;top:503.00px;font-size:16.7px;font-weight:400;color:#333;letter-spacing:0.270px;-webkit-text-stroke:0.2px #333;">Status</div>
<div class="t" style="left:1879.25px;top:503.00px;font-size:16.7px;font-weight:400;color:#333;letter-spacing:0.375px;-webkit-text-stroke:0.2px #333;">Completed On</div>
<div class="t" style="left:51.96px;top:565.80px;font-size:16.7px;font-weight:400;color:#333;letter-spacing:-0.158px;-webkit-text-stroke:0.2px #333;">20250130-PCUK-001</div>
<div class="t" style="left:813.91px;top:554.20px;font-size:17.0px;font-weight:400;color:#333;letter-spacing:0.040px;-webkit-text-stroke:0.2px #333;">Make selection decisions</div>
<div class="t" style="left:815.23px;top:577.70px;font-size:17.0px;font-weight:400;color:#333;letter-spacing:0.169px;-webkit-text-stroke:0.2px #333;">View only</div>
<div class="t" style="left:1076.51px;top:554.20px;font-size:17.0px;font-weight:400;color:#333;letter-spacing:0.176px;-webkit-text-stroke:0.2px #333;">Return individual selections</div>
<div class="t" style="left:1562.86px;top:562.40px;font-size:16.7px;font-weight:400;color:#333;letter-spacing:0.671px;-webkit-text-stroke:0.2px #333;">Incomplete</div>
<div class="t" style="left:52.77px;top:628.20px;font-size:16.7px;font-weight:400;color:#333;letter-spacing:0.332px;-webkit-text-stroke:0.2px #333;">Accepted Applicant Documents</div>
<div class="t" style="left:1269.46px;top:628.20px;font-size:16.7px;font-weight:400;color:#333;letter-spacing:0.187px;-webkit-text-stroke:0.2px #333;">Is Required</div>
<div class="t" style="left:1684.83px;top:628.20px;font-size:16.7px;font-weight:400;color:#333;letter-spacing:0.365px;-webkit-text-stroke:0.2px #333;">View Applicant Documents</div>
<div class="t" style="left:51.95px;top:679.40px;font-size:16.7px;font-weight:400;color:#333;letter-spacing:0.318px;-webkit-text-stroke:0.2px #333;">Cover Letter</div>
<div class="t" style="left:51.43px;top:744.20px;font-size:16.7px;font-weight:400;color:#333;letter-spacing:0.298px;-webkit-text-stroke:0.2px #333;">DD-214/ Statement of Service</div>
<div class="t" style="left:51.43px;top:808.70px;font-size:16.7px;font-weight:400;color:#333;letter-spacing:0.412px;-webkit-text-stroke:0.2px #333;">Disability Letter (VA)</div>
<div class="t" style="left:51.43px;top:873.20px;font-size:16.7px;font-weight:400;color:#333;letter-spacing:0.373px;-webkit-text-stroke:0.2px #333;">Performance Appraisal</div>
<div class="t" style="left:51.43px;top:938.00px;font-size:16.7px;font-weight:400;color:#333;letter-spacing:0.054px;-webkit-text-stroke:0.2px #333;">Resume</div>
<div class="t" style="left:52.04px;top:1002.90px;font-size:16.7px;font-weight:400;color:#333;letter-spacing:0.348px;-webkit-text-stroke:0.2px #333;">SF-50/ Notification of Personnel Action</div>
<div class="t" style="left:193.53px;top:1064.40px;font-size:16.7px;font-weight:400;color:#333;letter-spacing:0.189px;-webkit-text-stroke:0.2px #333;">Mei-Ling Erickson</div>
<div class="t" style="left:1084.86px;top:1064.40px;font-size:16.7px;font-weight:400;color:#333;letter-spacing:0.341px;-webkit-text-stroke:0.2px #333;">2021234567</div>
<div class="t" style="left:1376.99px;top:1064.40px;font-size:16.7px;font-weight:400;color:#333;letter-spacing:0.321px;-webkit-text-stroke:0.2px #333;">meiling.erickson@opm.gov</div>
<div class="t" style="left:2202.65px;top:1152.90px;font-size:17.2px;font-weight:700;color:#fff;letter-spacing:0.000px;-webkit-text-stroke:0.3px #0a3157;transform:scaleX(0.9263);transform-origin:0.50px 14.00px;">Save</div>
<div class="t" style="left:2326.35px;top:1152.90px;font-size:17.2px;font-weight:700;color:#fff;letter-spacing:0.000px;-webkit-text-stroke:0.3px #0a3157;transform:scaleX(0.8929);transform-origin:0.50px 14.00px;">Send Review</div>
</body></html>
